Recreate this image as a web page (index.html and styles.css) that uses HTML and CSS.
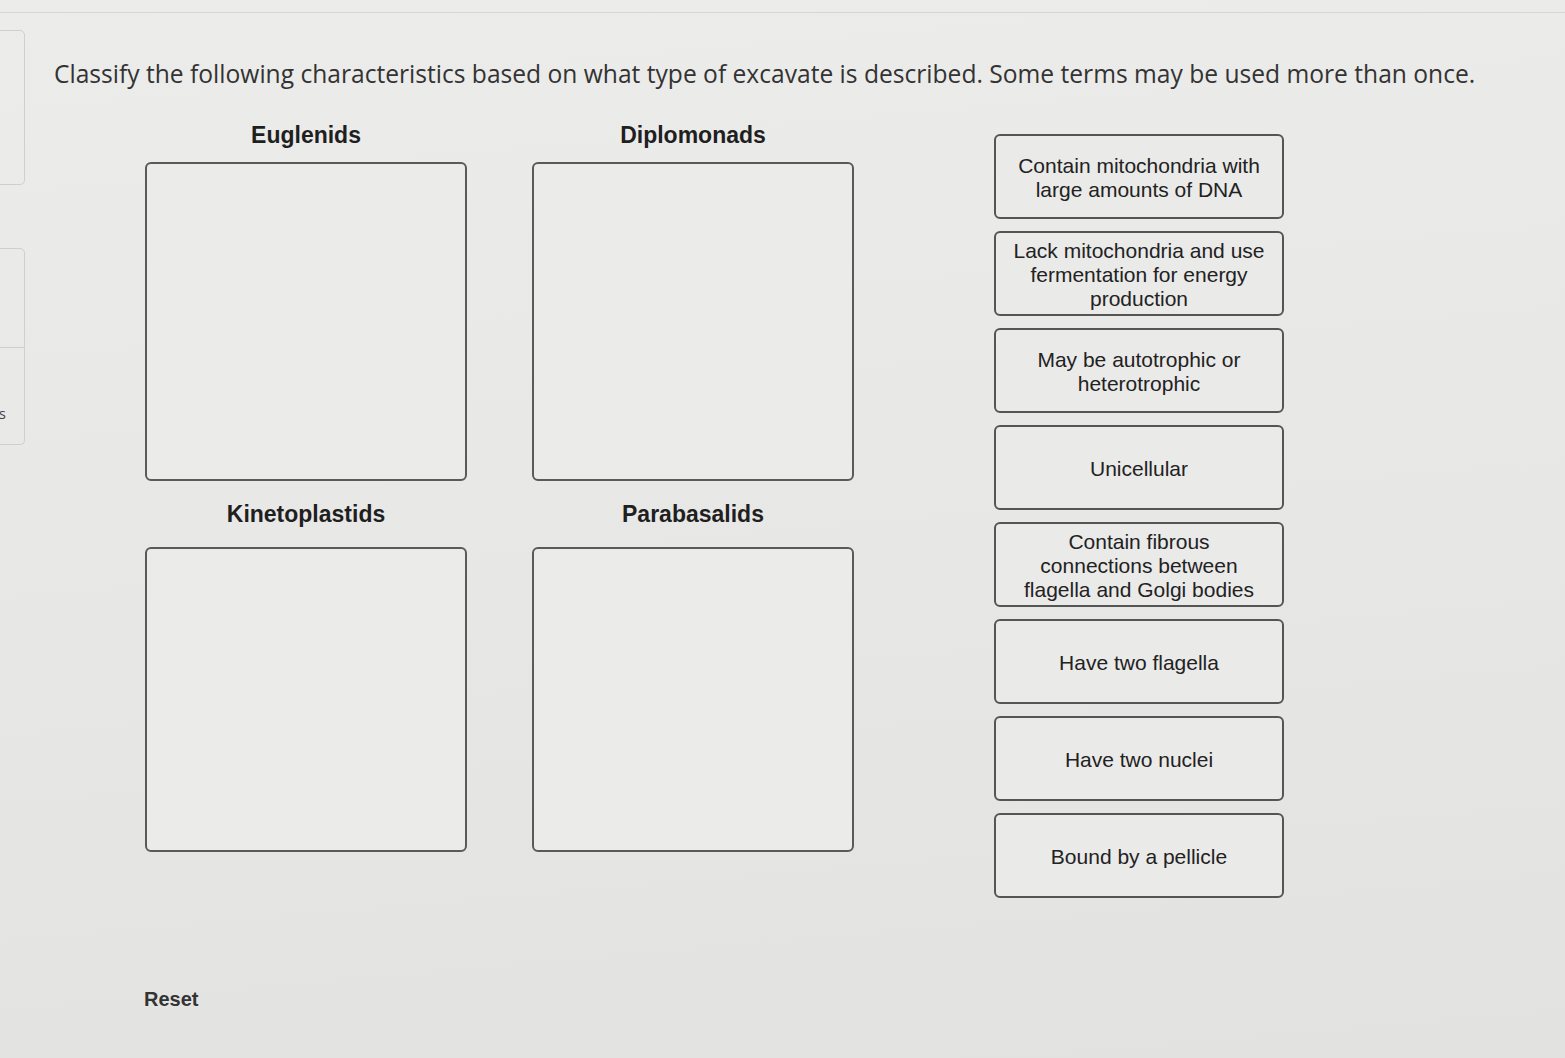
FILE: index.html
```html
<!DOCTYPE html>
<html lang="en">
<head>
<meta charset="utf-8">
<title>Classify excavates</title>
<link rel="stylesheet" href="styles.css">
</head>
<body>
<div class="topline"></div>
<div class="page">
  <aside class="sidebar">
    <div class="side-card side-card-a"></div>
    <div class="side-card side-card-b"></div>
    <div class="side-card side-card-c"><span class="side-label">s</span></div>
  </aside>
  <main class="main">
    <p class="prompt">Classify the following characteristics based on what type of excavate is described. Some terms may be used more than once.</p>
    <div class="work">
      <div class="targets">
        <section class="bucket">
          <h2 class="bucket-title">Euglenids</h2>
          <div class="drop drop-top"></div>
        </section>
        <section class="bucket">
          <h2 class="bucket-title">Diplomonads</h2>
          <div class="drop drop-top"></div>
        </section>
        <section class="bucket bucket-low">
          <h2 class="bucket-title">Kinetoplastids</h2>
          <div class="drop drop-bottom"></div>
        </section>
        <section class="bucket bucket-low">
          <h2 class="bucket-title">Parabasalids</h2>
          <div class="drop drop-bottom"></div>
        </section>
      </div>
      <div class="terms">
        <div class="term">Contain mitochondria with large amounts of DNA</div>
        <div class="term">Lack mitochondria and use fermentation for energy production</div>
        <div class="term">May be autotrophic or heterotrophic</div>
        <div class="term">Unicellular</div>
        <div class="term">Contain fibrous connections between flagella and Golgi bodies</div>
        <div class="term">Have two flagella</div>
        <div class="term">Have two nuclei</div>
        <div class="term">Bound by a pellicle</div>
      </div>
    </div>
    <div class="footer">
      <button class="reset" type="button">Reset</button>
    </div>
  </main>
</div>
</body>
</html>
```

FILE: styles.css
```css
* { box-sizing: border-box; }

html, body {
  margin: 0;
  padding: 0;
}

body {
  width: 1565px;
  height: 1058px;
  overflow: hidden;
  background: linear-gradient(175deg, #ececeb 0%, #e8e8e7 45%, #e2e2e1 100%);
  font-family: "Liberation Sans", Arial, sans-serif;
  color: #222;
}

.topline {
  height: 13px;
  border-bottom: 1px solid #d6d6d5;
}

.page {
  display: flex;
}

.sidebar {
  width: 26px;
  flex: none;
  overflow: hidden;
  padding-top: 17px;
}

.side-card {
  width: 120px;
  margin-left: -95px;
  border: 1px solid #cfcfce;
  border-radius: 5px;
}

.side-card-a { height: 155px; }
.side-card-b { height: 100px; margin-top: 63px; border-radius: 5px 5px 0 0; }
.side-card-c { height: 97px; border-top: none; border-radius: 0 0 5px 5px; position: relative; }

.side-label {
  position: absolute;
  right: 18px;
  top: 55px;
  font-family: "Open Sans", sans-serif;
  font-size: 15px;
  color: #444;
}

.main {
  flex: 1;
  padding-left: 28px;
}

.prompt {
  margin: 46px 0 0;
  font-family: "Open Sans", "Lato", sans-serif;
  font-size: 24.6px;
  line-height: 30px;
  color: #333;
  white-space: nowrap;
}

.work {
  display: flex;
  align-items: flex-start;
  margin-top: 33px;
}

.targets {
  margin-left: 91px;
  display: grid;
  grid-template-columns: 322px 322px;
  align-content: start;
  column-gap: 65px;
}

.bucket-title {
  margin: 0;
  text-align: center;
  font-size: 23px;
  line-height: 26px;
  font-weight: bold;
  color: #1f1f1f;
}

.bucket-low { margin-top: 20px; }

.drop {
  margin-top: 14px;
  border: 2px solid #5a5a5a;
  border-radius: 6px;
  background: #ebebea;
}

.drop-top { height: 319px; }
.bucket-low .drop { margin-top: 20px; }
.drop-bottom { height: 305px; }

.terms {
  margin-left: 140px;
  margin-top: 12px;
  width: 290px;
  display: flex;
  flex-direction: column;
  gap: 12px;
}

.term {
  height: 85px;
  border: 2px solid #555;
  border-radius: 6px;
  background: #eaeae9;
  display: flex;
  align-items: center;
  justify-content: center;
  text-align: center;
  padding: 2px 16px 0;
  font-size: 21px;
  line-height: 24px;
  color: #222;
}

.footer {
  margin-top: 89px;
  padding-left: 90px;
}

.reset {
  border: none;
  background: none;
  padding: 0;
  font-family: "Liberation Sans", Arial, sans-serif;
  font-weight: bold;
  font-size: 20px;
  line-height: 24px;
  color: #333;
}
```
